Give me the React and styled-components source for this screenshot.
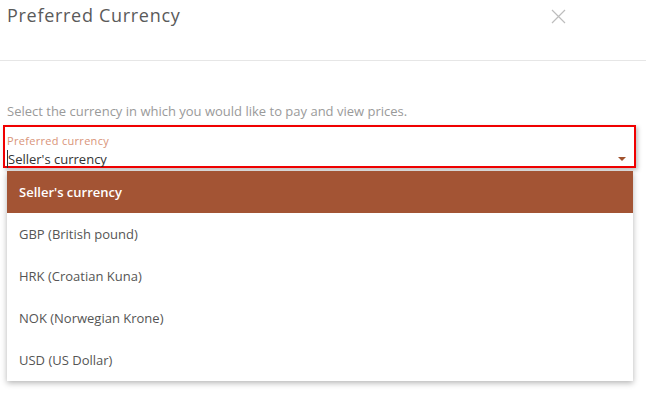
import React from "react";
import styled, { createGlobalStyle } from "styled-components";

const Global = createGlobalStyle`
  html, body { margin: 0; padding: 0; background: #fff; }
  body { font-family: "Open Sans", "Noto Sans", sans-serif; width: 646px; height: 409px; overflow: hidden; }
`;

const Page = styled.div`
  width: 646px;
  height: 409px;
  background: #fff;
  display: flex;
  flex-direction: column;
`;

const Header = styled.div`
  height: 61px;
  border-bottom: 1px solid #e6e6e6;
  display: flex;
  align-items: flex-start;
  justify-content: space-between;
  padding: 2px 80px 0 7px;
  box-sizing: border-box;
`;

const Title = styled.h1`
  margin: 0;
  font-size: 18px;
  font-weight: 400;
  color: #5a5a5a;
  letter-spacing: 0.7px;
  line-height: 26px;
`;

const Close = styled.button`
  border: 0;
  background: none;
  padding: 0;
  margin-top: 7px;
  width: 15px;
  height: 15px;
  cursor: pointer;
`;

const Body = styled.div`
  padding: 41px 10px 0 3px;
  display: flex;
  flex-direction: column;
`;

const Hint = styled.p`
  margin: 0 0 0 4px;
  font-size: 13px;
  color: #9a9a9a;
  line-height: 18px;
`;

const SelectWrap = styled.div`
  position: relative;
  margin-top: 5px;
`;

const Field = styled.div`
  border: 2px solid #f00000;
  height: 43px;
  box-sizing: border-box;
  padding: 7px 0 0 2px;
  box-shadow: 2px 2px 4px rgba(0, 0, 0, 0.25);
  position: relative;
  background: #fff;
`;

const Label = styled.div`
  font-size: 11px;
  color: #d99479;
  letter-spacing: 0.3px;
  line-height: 13px;
`;

const Value = styled.div`
  font-size: 13px;
  color: #333;
  line-height: 18px;
  border-left: 1px solid #333;
  display: inline-block;
`;

const Arrow = styled.span`
  position: absolute;
  right: 8px;
  top: 30px;
  width: 0;
  height: 0;
  border-left: 4px solid transparent;
  border-right: 4px solid transparent;
  border-top: 4px solid #a0522d;
`;

const Menu = styled.ul`
  list-style: none;
  margin: 0;
  padding: 0;
  position: absolute;
  left: 4px;
  top: 46px;
  width: 626px;
  background: #fff;
  box-shadow: 0 2px 6px rgba(0, 0, 0, 0.3);
`;

const Item = styled.li`
  height: 42px;
  display: flex;
  align-items: center;
  padding-left: 12px;
  font-size: 13px;
  color: ${(p) => (p.$active ? "#fff" : "#555")};
  background: ${(p) => (p.$active ? "#a35434" : "#fff")};
  font-weight: ${(p) => (p.$active ? 600 : 400)};
`;

const options = [
  "Seller's currency",
  "GBP (British pound)",
  "HRK (Croatian Kuna)",
  "NOK (Norwegian Krone)",
  "USD (US Dollar)",
];

export default function App() {
  return (
    <Page>
      <Global />
      <Header>
        <Title>Preferred Currency</Title>
        <Close aria-label="Close">
          <svg width="15" height="15" viewBox="0 0 15 15">
            <path d="M1 1 L14 14 M14 1 L1 14" stroke="#bdbdbd" strokeWidth="1.2" fill="none" />
          </svg>
        </Close>
      </Header>
      <Body>
        <Hint>Select the currency in which you would like to pay and view prices.</Hint>
        <SelectWrap>
          <Field>
            <Label>Preferred currency</Label>
            <Value>Seller's currency</Value>
            <Arrow />
          </Field>
          <Menu>
            {options.map((o, i) => (
              <Item key={o} $active={i === 0}>{o}</Item>
            ))}
          </Menu>
        </SelectWrap>
      </Body>
    </Page>
  );
}
